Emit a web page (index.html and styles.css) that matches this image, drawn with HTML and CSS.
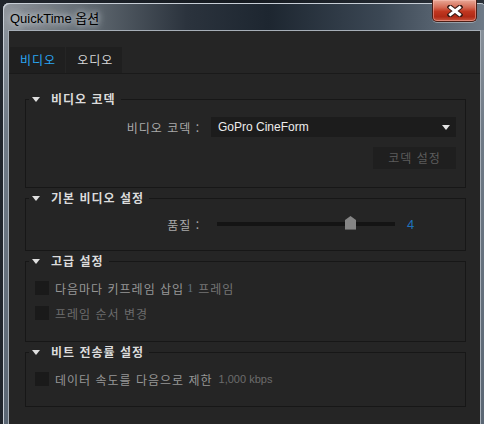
FILE: index.html
```html
<!DOCTYPE html>
<html lang="ko">
<head>
<meta charset="utf-8">
<title>QuickTime 옵션</title>
<link rel="stylesheet" href="styles.css">
</head>
<body>
<div class="window">
  <div class="titlebar">
    <span class="title">QuickTime 옵션</span>
    <div class="close">
      <svg width="16" height="12" viewBox="0 0 16 12">
        <path d="M3 2 L13 10 M13 2 L3 10" stroke="#3a1a14" stroke-width="5" stroke-linecap="square"/>
        <path d="M3.5 2.5 L12.5 9.5 M12.5 2.5 L3.5 9.5" stroke="#ffffff" stroke-width="3" stroke-linecap="square"/>
      </svg>
    </div>
  </div>
  <div class="client">
    <div class="tabs">
      <div class="tab active">비디오</div>
      <div class="tab">오디오</div>
    </div>
    <div class="panel">
      <fieldset class="group codec">
        <legend><span class="twisty"></span>비디오 코덱</legend>
        <div class="row">
          <span class="label">비디오 코덱 :</span>
          <div class="select"><span>GoPro CineForm</span><span class="caret"></span></div>
        </div>
        <div class="row end">
          <div class="button">코덱 설정</div>
        </div>
      </fieldset>

      <fieldset class="group quality">
        <legend><span class="twisty"></span>기본 비디오 설정</legend>
        <div class="row">
          <span class="label">품질 :</span>
          <div class="slider"><span class="thumb" style="left: 128px"></span></div>
          <span class="value">4</span>
        </div>
      </fieldset>

      <fieldset class="group advanced">
        <legend><span class="twisty"></span>고급 설정</legend>
        <div class="check"><span class="box"></span><span class="text">다음마다 키프레임 삽입</span><span class="num">1</span><span class="unit">프레임</span></div>
        <div class="check disabled"><span class="box"></span><span class="text">프레임 순서 변경</span></div>
      </fieldset>

      <fieldset class="group bitrate">
        <legend><span class="twisty"></span>비트 전송률 설정</legend>
        <div class="check"><span class="box"></span><span class="text">데이터 속도를 다음으로 제한</span><span class="rate">1,000 kbps</span></div>
      </fieldset>
    </div>
  </div>
</div>
</body>
</html>
```

FILE: styles.css
```css
html, body {
  margin: 0;
  height: 424px;
  overflow: hidden;
}

body {
  background: linear-gradient(to right, #20252c, #151a20 50%, #2a3038);
  font-family: "Noto Sans CJK KR", "Noto Sans", sans-serif;
  font-size: 12px;
}

/* glass frame */
.window {
  margin: 3px 0 0 3px;
  width: 473px;
  height: 430px;
  padding: 0 5px;
  border-radius: 6px 6px 0 0;
  background: linear-gradient(to bottom, #8e969f 0%, #6f7a86 30%, #5a6673 100%);
  box-shadow: inset 1px 1px 0 #c7ced6, inset -1px 0 0 #c7ced6;
  display: flex;
  flex-direction: column;
}

.titlebar {
  height: 27px;
  margin: 0 -5px;
  padding: 0 9px 0 7px;
  border-radius: 6px 6px 0 0;
  background: linear-gradient(to right, #8f959c 0%, #5f6870 18%, #2b333d 38%, #1d2630 55%, #3b4754 78%, #6f7b88 100%);
  box-shadow: inset 1px 1px 0 #c7ced6;
  display: flex;
  justify-content: space-between;
  align-items: flex-start;
}

.title {
  margin-top: 5px;
  font-family: "Liberation Sans", "Noto Sans CJK KR", sans-serif;
  font-size: 13px;
  color: #000;
  text-shadow: 0 0 6px rgba(230, 235, 240, 0.9), 0 0 10px rgba(230, 235, 240, 0.7);
}

.close {
  margin-top: -3px;
  width: 43px;
  height: 21px;
  border: 1px solid #4b1e16;
  border-top: none;
  border-radius: 0 0 5px 5px;
  background: linear-gradient(to bottom, #e8a896 0%, #d46a55 35%, #c0361f 55%, #b02a16 80%, #c8553e 100%);
  box-shadow: inset 0 0 0 1px rgba(255, 200, 190, 0.45), 0 1px 0 rgba(255, 255, 255, 0.35);
  display: flex;
  align-items: center;
  justify-content: center;
}

/* dialog client area */
.client {
  flex: 1;
  border: 1px solid #a6aeb7;
  border-bottom: none;
  background: #252525;
  padding-top: 16px;
  color: #a6a6a6;
  letter-spacing: 1px;
}

.tabs {
  display: flex;
  padding-left: 1px;
  border-bottom: 1px solid #1a1a1a;
}

.tab {
  height: 26px;
  line-height: 26px;
  padding: 0 9px 0 10px;
  background: #1f1f1f;
  color: #d6d6d6;
  font-size: 12px;
  white-space: nowrap;
  margin-right: 1px;
}

.tab.active {
  color: #2aa6f2;
}

.tab + .tab {
  padding: 0 9px 0 11px;
}

.panel {
  padding: 18px 14px 0 16px;
  display: flex;
  flex-direction: column;
  gap: 3px;
}

/* collapsible group boxes */
.group {
  margin: 0;
  padding: 0 9px 0 0;
  border: 1px solid #171717;
  min-width: 0;
}

.group legend {
  margin-left: 3px;
  padding: 0 5px 0 3px;
  line-height: 14px;
  height: 14px;
  font-weight: bold;
  color: #dcdcdc;
  display: flex;
  align-items: center;
}

.twisty {
  width: 0;
  height: 0;
  border-left: 4px solid transparent;
  border-right: 4px solid transparent;
  border-top: 5px solid #e0e0e0;
  margin-right: 11px;
}

.row {
  display: flex;
  align-items: center;
}

.label {
  width: 174px;
  text-align: right;
  margin-right: 11px;
  color: #a9a9a9;
  white-space: nowrap;
}

.codec {
  padding-top: 11px;
  padding-bottom: 18px;
}

.select {
  flex: 1;
  height: 20px;
  background: #1c1c1c;
  display: flex;
  align-items: center;
  justify-content: space-between;
  padding: 0 6px 0 7px;
  font-family: "Liberation Sans", sans-serif;
  font-size: 12px;
  letter-spacing: 0;
  color: #ececec;
}

.caret {
  width: 0;
  height: 0;
  border-left: 4.5px solid transparent;
  border-right: 4.5px solid transparent;
  border-top: 5px solid #e4e4e4;
}

.row.end {
  justify-content: flex-end;
  margin-top: 10px;
}

.button {
  width: 83px;
  height: 22px;
  line-height: 22px;
  text-align: center;
  background: #1f1f1f;
  color: #5c5c5c;
}

.quality {
  padding-top: 12px;
  padding-bottom: 19px;
}

.quality .row {
  height: 14px;
}

.slider {
  position: relative;
  margin-left: 6px;
  width: 178px;
  height: 4px;
  background: #141414;
}

.thumb {
  position: absolute;
  top: -6px;
  width: 11px;
  height: 14px;
  background: #858585;
  border-bottom: 1px solid #5b5b5b;
  box-sizing: border-box;
  clip-path: polygon(50% 0, 100% 28%, 100% 100%, 0 100%, 0 28%);
}

.value {
  margin-left: 12px;
  color: #1e72bd;
  font-family: "Liberation Sans", sans-serif;
  font-size: 13px;
  letter-spacing: 0;
}

/* checkbox rows */
.advanced {
  padding-top: 13px;
  padding-bottom: 21px;
}

.bitrate {
  padding-top: 13px;
  padding-bottom: 20px;
}

.check {
  display: flex;
  align-items: center;
  height: 14px;
  margin-left: 9px;
  color: #969696;
  white-space: nowrap;
}

.check + .check {
  margin-top: 11px;
}

.box {
  width: 14px;
  height: 14px;
  background: #1a1a1a;
  margin-right: 6px;
}

.check.disabled .text {
  color: #6c6c6c;
}

.num {
  margin-left: 3px;
  font-family: "Liberation Serif", serif;
  font-size: 12px;
  letter-spacing: 0;
  color: #5f7184;
}

.unit {
  margin-left: 5px;
  color: #757575;
}

.rate {
  margin-left: 6px;
  font-family: "Liberation Sans", sans-serif;
  font-size: 11px;
  letter-spacing: 0;
  color: #6c6c6c;
}
```
